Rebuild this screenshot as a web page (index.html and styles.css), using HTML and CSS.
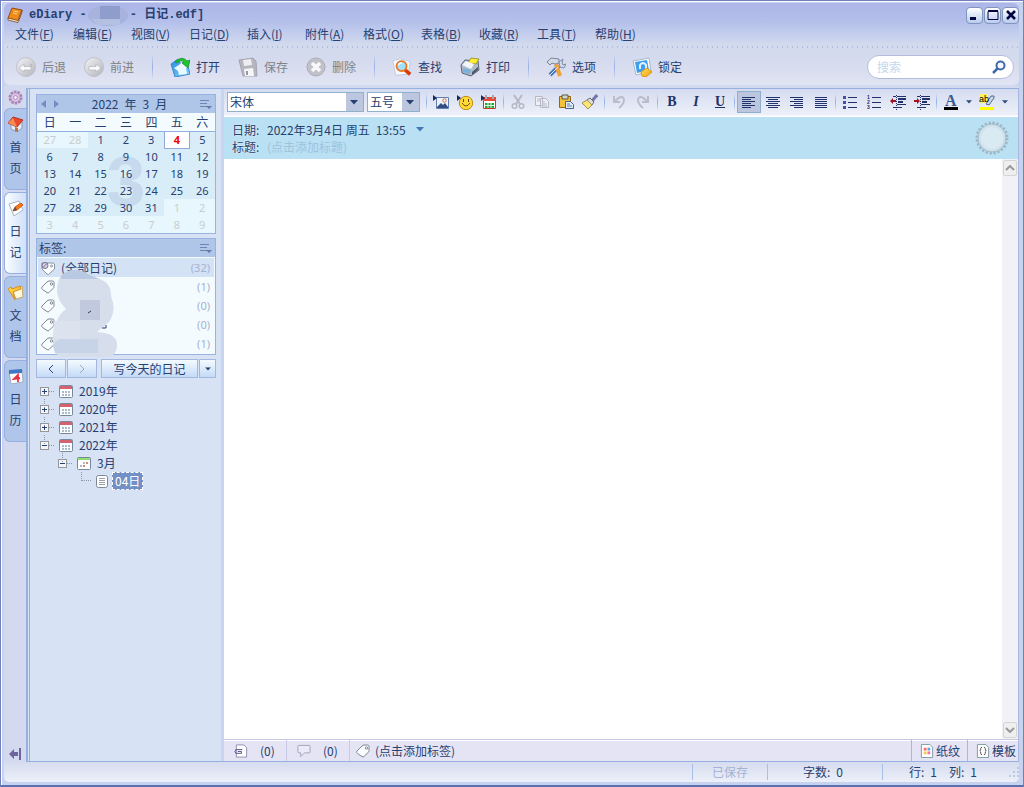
FILE: index.html
```
<!DOCTYPE html>
<html lang="zh-CN">
<head>
    <meta charset="UTF-8">
    <meta name="viewport" content="width=device-width, initial-scale=1.0">
    <title>eDiary - 日记.edf</title>
    <link rel="stylesheet" href="styles.css">
</head>
<body>
    <!-- Shared icons and gradients -->
    <svg class="defs" aria-hidden="true">
        <defs>
            <linearGradient id="silver" x1="0" y1="0" x2="1" y2="1"><stop offset="0" stop-color="#f2f2f6"/><stop offset="1" stop-color="#b4b5bd"/></linearGradient>
            <linearGradient id="sky" x1="0" y1="0" x2="1" y2="1"><stop offset="0" stop-color="#2588dc"/><stop offset="1" stop-color="#8ed8ff"/></linearGradient>
            <linearGradient id="gold" x1="0" y1="0" x2="1" y2="1"><stop offset="0" stop-color="#ffe65c"/><stop offset="1" stop-color="#ee9a10"/></linearGradient>
            <symbol id="tag" viewBox="0 0 14 14"><path d="M1 7 6 2Q7 1 8 1H11.500Q13 1 13 2.500V6.500Q13 7.500 12 8.500L8 12.500Q7 13.500 6 12.500L1.500 9.500Q0 8.500 1 7Z" fill="#fbfcfd" stroke="#7c8792"/><circle cx="10.500" cy="4" r="1.200" fill="#fff" stroke="#7c8792"/></symbol>
            <symbol id="year" viewBox="0 0 14 13"><rect x=".5" y=".5" width="13" height="12" rx="1" fill="#fff" stroke="#77889d"/><path d="M1 1h12v3H1z" fill="#d4636f"/><path d="M3 6h2v2H3zM6 6h2v2H6zM9 6h2v2H9zM3 9h2v2H3zM6 9h2v2H6zM9 9h2v2H9z" fill="#a9bbcf"/></symbol>
            <symbol id="menu" viewBox="0 0 12 10"><path d="M0 1.500h9M0 4.500h7M0 7.500h7" stroke="#7383b2"/><path d="M6 7h6L9 10z" fill="#6578ad"/></symbol>
            <symbol id="down" viewBox="0 0 8 5"><path d="M0 0h8L4 4.500z"/></symbol>
        </defs>
    </svg>

    <div class="window">
        <header class="header">
            <div class="titlebar">
                <svg class="book" viewBox="0 0 16 16"><path d="M5 1 15 3 11 14 1 11z" fill="#ef8918" stroke="#9a4e12"/><path d="M1 11 1 13 11 15.500 15 5 15 3 11 13.500z" fill="#fff3d6" stroke="#7b4314" stroke-width=".8"/><path d="M6.500 4l5 1M6 6l4 1" stroke="#ffd78c"/></svg>
                <h1 class="title">eDiary - <svg class="smudge" viewBox="0 0 40 21"><ellipse cx="20" cy="10.500" rx="20" ry="10.500" fill="#a7b2dd"/><path d="M12 1h20v13H12z" fill="#8f9dcc"/><path d="M3 14h29v6H10z" fill="#b4c0e2"/></svg>- 日记.edf]</h1>
                <div class="window-buttons">
                    <button class="win-btn" aria-label="最小化"><svg viewBox="0 0 12 12"><path d="M1 8h6v3H1z" fill="#04043f"/></svg></button>
                    <button class="win-btn" aria-label="最大化"><svg viewBox="0 0 12 12"><path d="M1 2.500h10v8H1zM1 1.500h10" fill="none" stroke="#04043f"/></svg></button>
                    <button class="win-btn" aria-label="关闭"><svg viewBox="0 0 12 12"><path d="M2 2l8 8M10 2l-8 8" stroke="#04043f" stroke-width="2.500"/></svg></button>
                </div>
            </div>

            <nav class="menubar">
                <button>文件(<u>F</u>)</button>
                <button>编辑(<u>E</u>)</button>
                <button>视图(<u>V</u>)</button>
                <button>日记(<u>D</u>)</button>
                <button>插入(<u>I</u>)</button>
                <button>附件(<u>A</u>)</button>
                <button>格式(<u>O</u>)</button>
                <button>表格(<u>B</u>)</button>
                <button>收藏(<u>R</u>)</button>
                <button>工具(<u>T</u>)</button>
                <button>帮助(<u>H</u>)</button>
            </nav>

            <div class="toolbar">
                <button class="tool" disabled><svg viewBox="0 0 20 20"><circle cx="10" cy="10" r="9.500" fill="url(#silver)" stroke="#bfc0c8"/><path d="M3 11l5-4v2.500h7V7v6H8v2z" fill="#fafafc" stroke="#b2b3ba" stroke-width=".7"/></svg>后退</button>
                <button class="tool" disabled><svg viewBox="0 0 20 20"><circle cx="10" cy="10" r="9.500" fill="url(#silver)" stroke="#bfc0c8"/><path d="M17 11l-5-4v2.500H5V13h7v2z" fill="#fafafc" stroke="#b2b3ba" stroke-width=".7"/></svg>前进</button>
                <span class="sep"></span>
                <button class="tool"><svg viewBox="0 0 20 20"><path d="M1 7 8 2 10 6 17 6 20 17 5 20z" fill="url(#sky)" stroke="#3a8bce"/><path d="M4 11l5-3 3-3 6 6-2 0 1 6-8 1-1-4z" fill="#eaf8ff"/><path d="M5 5Q12-2 17 4l3-1-2 8-6-5 2-1Q11 2 7 6z" fill="#20c52e" stroke="#118b27" stroke-width=".7"/></svg>打开</button>
                <button class="tool" disabled><svg viewBox="0 0 20 20"><path d="M1 3 15 1l3 3 1 15H5z" fill="#b5b6be" stroke="#a3a4ad"/><path d="M5 3l8-1 1 6-8 1z" fill="#eeeef2"/><path d="M6 12l9-1 1 8H7z" fill="#f6f6f9"/><path d="M8 14h2v4H8z" fill="#96979f"/></svg>保存</button>
                <button class="tool" disabled><svg viewBox="0 0 20 20"><circle cx="10" cy="10" r="9" fill="#c0c1c9" stroke="#acadb6"/><path d="M6 6l8 8M14 6l-8 8" stroke="#f9f9fc" stroke-width="3.500"/></svg>删除</button>
                <span class="sep"></span>
                <button class="tool"><svg viewBox="0 0 22 20"><path d="M1 3l8-2 11 3-2 14-14 1z" fill="#f8faff" stroke="#bcc7e2"/><path d="M14 13l6 5" stroke="#d83d08" stroke-width="4"/><circle cx="10.500" cy="9" r="5.500" fill="#9fe0fb" stroke="#f0721b" stroke-width="2"/><path d="M7 8q1-3 4-2" fill="none" stroke="#fff" stroke-width="1.500"/></svg>查找</button>
                <button class="tool"><svg viewBox="0 0 20 20"><path d="M1 8 5 3l13 1 1 9-8 6-9-3z" fill="#b4bcc9" stroke="#5a6577"/><path d="M8 6l3-5 8 1-3 5z" fill="#ffec30" stroke="#9c9a38"/><path d="M2 8l4-4 8 3-3 5z" fill="#f2f6fa"/><path d="M3 11l8 2-1 4-7-2z" fill="#77b3db"/><path d="M12 15l6-5v3l-6 5z" fill="#4c5869"/></svg>打印</button>
                <span class="sep"></span>
                <button class="tool"><svg viewBox="0 0 20 20"><path d="M13 9 4 18" stroke="#4578ba" stroke-width="4"/><path d="M10 7 14 19" stroke="#f0a13b" stroke-width="4"/><path d="M1 5l4-4 8 1v4l-4 1-3-1-2 2z" fill="#d2dae5" stroke="#7b8798"/><path d="M17 2l-4 3 1 5 4 1 2-4-3 1-1-2z" fill="#d6dfeb" stroke="#788ba8"/><path d="M12 10 4 18" stroke="#d8e4f2"/></svg>选项</button>
                <span class="sep"></span>
                <button class="tool"><svg viewBox="0 0 20 20"><path d="M1 4 17 1l2 13-15 4z" fill="#f8fcff" stroke="#a8b7c9"/><path d="M3 5l12-2 2 10-12 3z" fill="#409fed"/><path d="M8 12V8q3-4 6 0v5" fill="none" stroke="#e2f1ff" stroke-width="2"/><path d="M9 15l6-4 5 4-6 5-4-1z" fill="url(#gold)" stroke="#df9512"/></svg>锁定</button>
                <form class="search">
                    <input type="search" placeholder="搜索" aria-label="搜索">
                    <button aria-label="开始搜索"><svg viewBox="0 0 14 14"><circle cx="8.500" cy="5.500" r="4" fill="#f7fbff" stroke="#3f68ab" stroke-width="2"/><path d="M5.500 8.500 1 13" stroke="#3f68ab" stroke-width="2.500"/></svg></button>
                </form>
            </div>
        </header>

        <div class="body">
            <!-- Vertical tabs -->
            <nav class="tabs">
                <button class="gear" aria-label="设置"><svg viewBox="0 0 16 16"><circle cx="8" cy="8" r="6" fill="#e0c9e7" stroke="#a884b5" stroke-width="3" stroke-dasharray="2.600 1.100"/><circle cx="8" cy="8" r="5" fill="#dcc5e5" stroke="#b18cbc"/><circle cx="8" cy="8" r="2" fill="#fff" stroke="#a37db4"/></svg></button>
                <button class="tab"><svg viewBox="0 0 16 16"><path d="M3 7v6l6 3 5-4V6z" fill="#e4ecf7" stroke="#8b9bb5"/><path d="M0 7 5 1l10 3-6 7z" fill="#e84a30" stroke="#b83222"/><path d="M0 7l5-5 4 9" fill="#f58b55"/><path d="M7 11l3 1v4l-3-1z" fill="#ba713d"/></svg><span>首页</span></button>
                <button class="tab active"><svg viewBox="0 0 16 16"><path d="M1 4l10-3 4 9-9 6z" fill="#fff" stroke="#a9b3c4"/><path d="M5 11 7 7l6-4 2 2-6 5z" fill="#f57b1b" stroke="#c85716"/><path d="M5 11l2-4 2 3z" fill="#684e4a"/></svg><span>日记</span></button>
                <button class="tab"><svg viewBox="0 0 16 16"><path d="M4 5l10-3 1 11-7 2z" fill="#fff8dc" stroke="#c5a766"/><path d="M0 5 3 3l1 2 8-3 1 3-8 3 2 8z" fill="url(#gold)" stroke="#d99122"/></svg><span>文档</span></button>
                <button class="tab"><svg viewBox="0 0 16 16"><path d="M1 3l13-1 1 12-12 2z" fill="#fff" stroke="#9eacc2"/><path d="M1 2l13-1v4L1 6z" fill="#3d78c7"/><path d="M10 14V7l-4 4 6-1" fill="none" stroke="#ea3040" stroke-width="1.800"/></svg><span>日历</span></button>
                <button class="collapse" aria-label="收起"><svg viewBox="0 0 12 12"><path d="M0 6l5-5v3h4v4H5v3z" fill="#70639f"/><path d="M11 0v12" stroke="#70639f" stroke-width="2"/></svg></button>
            </nav>

            <main class="panels">
                <aside class="sidebar">
                    <!-- Calendar -->
                    <section class="box calendar">
                        <div class="box-head">
                            <button aria-label="上个月"><svg width="5" height="8" viewBox="0 0 5 8"><path d="M5 0v8L0 4z" fill="#788bbd"/></svg></button>
                            <button aria-label="下个月"><svg width="5" height="8" viewBox="0 0 5 8"><path d="M0 0v8l5-4z" fill="#788bbd"/></svg></button>
                            <span class="month">2022&ensp;年&ensp;3&ensp;月</span>
                            <button aria-label="日历菜单"><svg width="12" height="10"><use href="#menu"/></svg></button>
                        </div>
                        <div class="days">
                            <span class="watermark" aria-hidden="true">3</span>
                            <table>
                                <thead><tr><th>日</th><th>一</th><th>二</th><th>三</th><th>四</th><th>五</th><th>六</th></tr></thead>
                                <tbody>
                                    <tr><td class="out">27</td><td class="out">28</td><td>1</td><td>2</td><td>3</td><td class="today">4</td><td>5</td></tr>
                                    <tr><td>6</td><td>7</td><td>8</td><td>9</td><td>10</td><td>11</td><td>12</td></tr>
                                    <tr><td>13</td><td>14</td><td>15</td><td>16</td><td>17</td><td>18</td><td>19</td></tr>
                                    <tr><td>20</td><td>21</td><td>22</td><td>23</td><td>24</td><td>25</td><td>26</td></tr>
                                    <tr><td>27</td><td>28</td><td>29</td><td>30</td><td>31</td><td class="out">1</td><td class="out">2</td></tr>
                                    <tr><td class="out">3</td><td class="out">4</td><td class="out">5</td><td class="out">6</td><td class="out">7</td><td class="out">8</td><td class="out">9</td></tr>
                                </tbody>
                            </table>
                        </div>
                    </section>

                    <!-- Tags -->
                    <section class="box tags">
                        <div class="box-head">
                            <span class="box-title">标签:</span>
                            <button aria-label="标签菜单"><svg width="12" height="10"><use href="#menu"/></svg></button>
                        </div>
                        <ul class="tag-list">
                            <li class="selected"><svg viewBox="0 0 14 14"><path d="M1 4V2H12L13.500 3V8L7.500 13.500 6 13 1 8z" fill="#fff" stroke="#89939f"/><circle cx="4" cy="4.500" r="3" fill="#d9d4e7" stroke="#756f96"/><path d="M2 6.500l4-4" stroke="#756f96"/><circle cx="10.500" cy="5" r="1" fill="none" stroke="#89939f"/></svg><span>(全部日记)</span><b>(32)</b></li>
                            <li><svg><use href="#tag"/></svg><b>(1)</b></li>
                            <li><svg><use href="#tag"/></svg><b>(0)</b></li>
                            <li><svg><use href="#tag"/></svg><b>(0)</b></li>
                            <li><svg><use href="#tag"/></svg><b>(1)</b></li>
                        </ul>
                        <svg class="tag-smudge" viewBox="0 0 66 90" aria-hidden="true">
                            <path d="M9 7Q19-3 34 4 44 9 48 10 60 15 59 27 65 41 57 53L45 63Q66 64 65 77 64 90 50 88H8Q-2 82 2 60 6 45 14 40 6 32 5 23 5 12 9 7Z" fill="#d6deeb"/>
                            <path d="M9 7Q19-3 34 4L47 10H9z" fill="#b9c9e3"/><path d="M28 31h20v20H28z" fill="#c0c9dd"/><path d="M8 70h38v14H3l-2-8z" fill="#c7d3e7"/><path d="M2 52h26v18H1z" fill="#dce3ee"/>
                            <path d="M36 44l3-2M50 59h4v-3" fill="none" stroke="#2b3c70"/>
                        </svg>
                    </section>

                    <div class="day-nav">
                        <button class="glossy" aria-label="前一天"><svg width="6" height="8" viewBox="0 0 6 8"><path d="M5 0 1 4l4 4" fill="none" stroke="#2b4478"/></svg></button>
                        <button class="glossy" aria-label="后一天" disabled><svg width="6" height="8" viewBox="0 0 6 8"><path d="M1 0l4 4-4 4" fill="none" stroke="#9aa6bf"/></svg></button>
                        <button class="glossy write">写今天的日记</button>
                        <button class="glossy more" aria-label="更多"><svg width="6" height="4" viewBox="0 0 8 5"><use href="#down"/></svg></button>
                    </div>

                    <!-- Diary tree -->
                    <ul class="tree">
                        <li><button class="plus" aria-label="展开"></button><i></i><svg width="14" height="13"><use href="#year"/></svg><span>2019年</span></li>
                        <li><button class="plus" aria-label="展开"></button><i></i><svg width="14" height="13"><use href="#year"/></svg><span>2020年</span></li>
                        <li><button class="plus" aria-label="展开"></button><i></i><svg width="14" height="13"><use href="#year"/></svg><span>2021年</span></li>
                        <li><button class="minus" aria-label="折叠"></button><i></i><svg width="14" height="13"><use href="#year"/></svg><span>2022年</span></li>
                        <li class="level2"><button class="minus" aria-label="折叠"></button><i></i><svg width="14" height="13" viewBox="0 0 14 13"><rect x=".5" y=".5" width="13" height="12" rx="1" fill="#fff" stroke="#77889d"/><path d="M1 1h12v2H1z" fill="#8de070"/><path d="M6 5h2v2H6zM3 8h2v2H3z" fill="#a9bbcf"/><path d="M9 5h2v2H9zM6 8h2v2H6z" fill="#e38471"/></svg><span>3月</span></li>
                        <li class="level3"><em></em><svg width="12" height="13" viewBox="0 0 12 13"><rect x=".5" y=".5" width="11" height="12" rx="2" fill="#fff" stroke="#7c8794"/><path d="M3 3.500h6M3 5.500h6M3 7.500h6M3 9.500h6" stroke="#9a9fa7"/></svg><span class="chosen">04日</span></li>
                    </ul>
                </aside>

                <section class="editor">
                    <div class="format-bar">
                        <span class="combo font-combo"><select aria-label="字体"><option>宋体</option></select><svg><use href="#down"/></svg></span>
                        <span class="combo size-combo"><select aria-label="字号"><option>五号</option></select><svg><use href="#down"/></svg></span>
                        <span class="bar-sep first"></span>
                        <button aria-label="插入图片"><svg viewBox="0 0 16 16"><path d="M3.500 3.500h12v11h-12z" fill="#e9f4ff" stroke="#637eb2"/><path d="M4 13l4-4 2 2 2-2 3 4v1H4z" fill="#344c80"/><circle cx="11.500" cy="6.500" r="1.700" fill="#fff" stroke="#d36644"/><path d="M0 1l4 3-4 3z" fill="#18265e"/></svg></button>
                        <button aria-label="插入表情"><svg viewBox="0 0 16 16"><circle cx="9" cy="9" r="6.700" fill="#ffdc35" stroke="#bd8918"/><path d="M5 9q4 6 8 0" fill="none" stroke="#794e10"/><path d="M6 5h1v3H6zM11 5h1v3h-1z" fill="#664617"/><path d="M0 1l4 3-4 3z" fill="#18265e"/></svg></button>
                        <button aria-label="插入日期"><svg viewBox="0 0 16 16"><path d="M2.500 3.500h12v11h-12z" fill="#fff" stroke="#c43a2e"/><path d="M2 3h13v4H2z" fill="#e34a38"/><path d="M4 9h9v5H4z" fill="#29a63c"/><path d="M4 11.500h9M7 9v5M10 9v5" stroke="#d7f6d8"/><path d="M5 1v4M12 1v4" stroke="#a8a8b0" stroke-width="2"/><path d="M0 1l4 3-4 3z" fill="#18265e"/></svg></button>
                        <span class="bar-sep"></span>
                        <button aria-label="剪切" disabled><svg viewBox="0 0 16 16"><path d="M4 1l6 9M12 1 6 10" stroke="#b5b8c5" stroke-width="2"/><circle cx="4.500" cy="12" r="2.300" fill="none" stroke="#b5b8c5" stroke-width="1.500"/><circle cx="11.500" cy="12" r="2.300" fill="none" stroke="#b5b8c5" stroke-width="1.500"/></svg></button>
                        <button aria-label="复制" disabled><svg viewBox="0 0 16 16"><path d="M1.500 2.500h7v9h-7zM6.500 4.500h5l3 3v6h-8z" fill="#eff0f6" stroke="#b5b8c5"/><path d="M3 5h3M3 7h3M8 8h3M8 10h5M8 12h5" stroke="#b5b8c5"/></svg></button>
                        <button aria-label="粘贴"><svg viewBox="0 0 16 16"><path d="M1.500 2.500h11v11h-11z" fill="#f4c13b" stroke="#8e6818"/><path d="M4 1h6v4H4z" fill="#d5d4cb" stroke="#5e5843"/><path d="M7.500 7.500h5l3 3v4h-8z" fill="#e1edfb" stroke="#46648e"/><path d="M9 10h3M9 12h5" stroke="#647fa5"/></svg></button>
                        <button aria-label="格式刷"><svg viewBox="0 0 16 16"><path d="M10 7l5-6" stroke="#7775ad" stroke-width="3"/><path d="M8 4l4 4-2 3-5-5z" fill="#ddd" stroke="#66657b"/><path d="M5 6l5 5-4 4-6-6z" fill="#f8e575" stroke="#a09155"/></svg></button>
                        <span class="bar-sep"></span>
                        <button aria-label="撤销" disabled><svg viewBox="0 0 16 16"><path d="M3 2v6h6M3 8Q12-1 13 6q0 4-5 8" fill="none" stroke="#bbbdca" stroke-width="2"/></svg></button>
                        <button aria-label="重做" disabled><svg viewBox="0 0 16 16"><path d="M13 2v6H7M13 8Q4-1 3 6q0 4 5 8" fill="none" stroke="#bbbdca" stroke-width="2"/></svg></button>
                        <span class="bar-sep"></span>
                        <button class="letter">B</button>
                        <button class="letter italic">I</button>
                        <button class="letter under">U</button>
                        <span class="bar-sep"></span>
                        <button class="pressed" aria-label="左对齐"><svg viewBox="0 0 16 16"><path d="M1 3.500h13M1 5.500h9M1 7.500h13M1 9.500h9M1 11.500h13M1 13.500h9" stroke="#22336b"/></svg></button>
                        <button aria-label="居中"><svg viewBox="0 0 16 16"><path d="M1 3.500h14M3 5.500h10M1 7.500h14M3 9.500h10M1 11.500h14M3 13.500h10" stroke="#22336b"/></svg></button>
                        <button aria-label="右对齐"><svg viewBox="0 0 16 16"><path d="M1 3.500h13M5 5.500h9M1 7.500h13M5 9.500h9M1 11.500h13M5 13.500h9" stroke="#22336b"/></svg></button>
                        <button aria-label="两端对齐"><svg viewBox="0 0 16 16"><path d="M2 3.500h12M2 5.500h12M2 7.500h12M2 9.500h12M2 11.500h12M2 13.500h12" stroke="#22336b"/></svg></button>
                        <span class="bar-sep"></span>
                        <button aria-label="项目符号"><svg viewBox="0 0 16 16"><path d="M1 2h3v3H1zM1 7h3v3H1zM1 12h3v3H1z" fill="#4550ad"/><path d="M6 3.500h9M6 8.500h9M6 13.500h9" stroke="#22336b"/></svg></button>
                        <button aria-label="编号"><svg viewBox="0 0 16 16"><text class="num" x="1" y="5">1</text><text class="num" x="1" y="10">2</text><text class="num" x="1" y="15">3</text><path d="M6 3.500h9M6 8.500h9M6 13.500h9" stroke="#22336b"/></svg></button>
                        <button aria-label="减少缩进"><svg viewBox="0 0 16 16"><path d="M3 2.500h3M7 2.500h9M7 10.500h9M3 13.500h3M7 13.500h5" stroke="#22336b"/><path d="M8 5h8M8 8h5" stroke="#22336b" stroke-width="2"/><path d="M6.500 1v15" stroke="#22336b" stroke-dasharray="1 1"/><path d="M0 7l3-3v2h3v2H3v2z" fill="#a3121e"/></svg></button>
                        <button aria-label="增加缩进"><svg viewBox="0 0 16 16"><path d="M3 2.500h3M7 2.500h9M7 10.500h9M3 13.500h3M7 13.500h5" stroke="#22336b"/><path d="M8 5h8M8 8h5" stroke="#22336b" stroke-width="2"/><path d="M6.500 1v15" stroke="#22336b" stroke-dasharray="1 1"/><path d="M6 7 3 4v2H0v2h3v2z" fill="#a3121e"/></svg></button>
                        <span class="bar-sep"></span>
                        <button aria-label="字体颜色"><svg class="tall" viewBox="0 0 16 20"><text class="big-a" x="2" y="14">A</text><path d="M1 15h14v3H1z"/></svg></button>
                        <button class="caret" aria-label="更多字体颜色"><svg><use href="#down"/></svg></button>
                        <button aria-label="突出显示"><svg class="tall" viewBox="0 0 16 20"><path d="M0 2h9v9H0z" fill="#fff45b"/><path d="M7 12 12 4h3v2l-5 7z" fill="#cad8e9" stroke="#526b8d"/><text class="ab" x="0" y="10">ab</text><path d="M1 15h14v3H1z" fill="#ff0"/></svg></button>
                        <button class="caret" aria-label="更多突出显示颜色"><svg><use href="#down"/></svg></button>
                    </div>

                    <div class="entry-head">
                        <div class="entry-info">
                            <div><span class="key">日期:</span><time datetime="2022-03-04T13:55">2022年3月4日 周五&ensp;13:55</time><button aria-label="选择日期"><svg><use href="#down"/></svg></button></div>
                            <div><label class="key" for="entry-title">标题:</label><input id="entry-title" type="text" placeholder="(点击添加标题)"></div>
                        </div>
                        <svg class="seal" viewBox="0 0 34 34"><circle cx="17" cy="17" r="14.500" fill="none" stroke="#9cb6c4" stroke-width="4" stroke-dasharray="2.200 1.596"/><circle cx="17" cy="17" r="14" fill="#cfe2ec" stroke="#a3bdca"/><circle cx="17" cy="17" r="11" fill="#d9eaf3"/></svg>
                    </div>

                    <div class="page">
                        <textarea aria-label="日记正文"></textarea>
                        <div class="scrollbar">
                            <button aria-label="向上滚动"><svg width="10" height="6" viewBox="0 0 10 6"><path d="M1 5l4-4 4 4" fill="none" stroke="#999" stroke-width="2"/></svg></button>
                            <button aria-label="向下滚动"><svg width="10" height="6" viewBox="0 0 10 6"><path d="M1 1l4 4 4-4" fill="none" stroke="#999" stroke-width="2"/></svg></button>
                        </div>
                    </div>

                    <div class="entry-foot">
                        <button class="count"><svg viewBox="0 0 15 14"><path d="M2.500.5h8l3 3v10h-11z" fill="#fff" stroke="#8f8bae"/><path d="M9 5.500H2Q0 7.500 2 9.500h6V7.500H4" fill="none" stroke="#4c4b83"/></svg>(0)</button>
                        <button class="count"><svg viewBox="0 0 15 14"><path d="M2 1h11q1 0 1 1v6q0 1-1 1H8l-4 4V9H2Q1 9 1 8V2q0-1 1-1z" fill="#eceaf6" stroke="#a29fbb"/></svg>(0)</button>
                        <button class="add-tag"><svg><use href="#tag"/></svg>(点击添加标签)</button>
                        <span class="foot-gap"></span>
                        <button class="foot-btn"><svg viewBox="0 0 13 15"><path d="M.5.500h9l3 3v11H.5z" fill="#fff" stroke="#78999a"/><path d="M3 4h3v3H3z" fill="#ff6b62"/><path d="M7 4h3v3H7z" fill="#55a8ec"/><path d="M3 8h3v3H3z" fill="#f4ca50"/><path d="M7 8h3v3H7z" fill="#f66bb1"/></svg>纸纹</button>
                        <button class="foot-btn"><svg viewBox="0 0 13 15"><path d="M.5.500h9l3 3v11H.5z" fill="#fff" stroke="#78999a"/><path d="M5.500 3.500Q4 3.500 4 5v1.500L3 7.500l1 1V10q0 1.500 1.500 1.500M7.500 3.500Q9 3.500 9 5v1.500l1 1-1 1V10q0 1.500-1.500 1.500" fill="none" stroke="#4c4c4c"/></svg>模板</button>
                    </div>
                </section>
            </main>
        </div>

        <footer class="statusbar">
            <span class="saved">已保存</span>
            <span class="words">字数:&ensp;0</span>
            <span class="position">行:&ensp;1&emsp;列:&ensp;1</span>
            <svg class="grip" viewBox="0 0 12 12"><path d="M10 1h2v2h-2zM6 5h2v2H6zM10 5h2v2h-2zM2 9h2v2H2zM6 9h2v2H6zM10 9h2v2h-2z" fill="#bcc7e7"/></svg>
        </footer>
    </div>
</body>
</html>
```
FILE: styles.css
```
* {
    box-sizing: border-box;
}
body {
    margin: 0;
    font-family: "Noto Sans CJK SC", sans-serif;
    font-size: 12px;
    line-height: 16px;
    color: #26406f;
}
button, input, select, textarea {
    font: inherit;
    color: inherit;
    margin: 0;
    padding: 0;
    border: 0;
    background: none;
}
svg {
    display: block;
    flex: none;
}
ul {
    margin: 0;
    padding: 0;
    list-style: none;
}
.defs {
    position: absolute;
    width: 0;
    height: 0;
}
.window {
    display: flex;
    flex-direction: column;
    min-height: 100vh;
    padding: 2px 4px 3px 3px;
    border: 1px solid #6f80bd;
    border-bottom: 2px solid #5b70b2;
    background: #c7d2ef;
    box-shadow: inset 1px 1px 0 #fff;
}

/* Header */
.header {
    padding-bottom: 2px;
    border-bottom: 1px solid #d0daf4;
    border-radius: 6px;
    background: linear-gradient(#adb6e8, #b3bfeb 18px, #d2daee 42px, #d6dbee 60px, #e1e4f3);
}
.titlebar {
    display: flex;
    align-items: center;
    height: 22px;
    padding: 2px 0 0 3px;
}
.book {
    width: 16px;
    height: 16px;
}
.title {
    display: flex;
    align-items: center;
    flex: 1;
    margin: 0 0 0 6px;
    font: bold 12px/16px "Liberation Mono", "Noto Sans CJK SC", monospace;
    white-space: pre;
}
.smudge {
    width: 40px;
    height: 21px;
    margin: 0 2px 0 -6px;
}
.window-buttons {
    display: flex;
    gap: 1px;
}
.win-btn {
    display: grid;
    place-items: center;
    width: 17px;
    height: 17px;
    border: 1px solid #7f95bb;
    border-radius: 4px;
    background: linear-gradient(#fff, #b9cbee);
}
.win-btn svg {
    width: 12px;
    height: 12px;
}
.menubar {
    display: flex;
    height: 21px;
    padding: 0 10px 3px 11px;
}
.menubar button {
    width: 58px;
    text-align: left;
    white-space: nowrap;
}
.toolbar {
    display: flex;
    align-items: center;
    gap: 17px;
    height: 37px;
    padding: 4px 4px 0 11px;
    margin: 0 1px;
    background: radial-gradient(circle, #b2bee0 1px, transparent 1px) 0 0 / 5px 2px repeat-x;
}
.tool {
    display: flex;
    align-items: center;
    gap: 6px;
    width: 51px;
    white-space: nowrap;
}
.tool svg {
    width: 20px;
    height: 20px;
}
.tool:disabled {
    color: #808286;
}
.sep {
    width: 1px;
    height: 26px;
    background: linear-gradient(transparent, #94b0e5, transparent);
}
.search {
    display: flex;
    align-items: center;
    width: 147px;
    height: 24px;
    margin-left: auto;
    padding: 0 7px 0 9px;
    border: 1px solid #b2bddc;
    border-radius: 12px;
    background: #fff;
}
.search input {
    flex: 1;
    min-width: 0;
    outline: none;
}
.search input::placeholder {
    color: #c6d8eb;
}
.search svg {
    width: 14px;
    height: 14px;
}

/* Body */
.body {
    display: flex;
    flex: 1;
    padding-top: 2px;
    background: #d3daef;
}
.tabs {
    display: flex;
    flex-direction: column;
    gap: 2px;
    width: 22px;
}
.gear {
    display: grid;
    place-items: center;
    height: 18px;
}
.gear svg {
    width: 15px;
    height: 15px;
}
.tab {
    display: flex;
    flex-direction: column;
    align-items: center;
    gap: 4px;
    height: 82px;
    padding-top: 7px;
    border: 1px solid #94afe0;
    border-right: 0;
    border-radius: 6px 0 0 6px;
    background: #afc5e9;
}
.tab svg {
    width: 16px;
    height: 16px;
}
.tab span {
    width: 12px;
    line-height: 21px;
}
.tab.active {
    background: linear-gradient(90deg, #fbfdff, #cfe0f8);
}
.collapse {
    margin: auto 0 2px 5px;
}
.collapse svg {
    width: 12px;
    height: 12px;
}
.panels {
    display: flex;
    flex: 1;
    min-width: 0;
    border: 1px solid #97b0e2;
    border-right-color: #a9b8e1;
    background: #c8d5f0;
}
.sidebar {
    width: 194px;
    margin-right: 3px;
    padding: 5px 5px 0 5px;
    border-left: 3px double #97b0e2;
    background: #d7e2f5;
}
.box {
    position: relative;
    margin: 0 0 4px 1px;
    border: 1px solid #99b2e0;
    background: #f4fbff;
}
.box-head {
    display: flex;
    align-items: center;
    gap: 8px;
    height: 18px;
    padding: 0 3px 0 4px;
    background: #afc6e9;
}
.box-title {
    flex: 1;
    margin-left: -2px;
}
.month {
    flex: 1;
    text-align: center;
    white-space: nowrap;
}
.days {
    position: relative;
    background: #d9edf9;
}
.watermark {
    position: absolute;
    top: 34px;
    left: 50%;
    transform: translateX(-50%);
    font: bold 70px/70px "Liberation Sans", sans-serif;
    color: #c7daed;
}
.days table {
    position: relative;
    width: 100%;
    table-layout: fixed;
    border-collapse: collapse;
    text-align: center;
}
.days th {
    height: 18px;
    padding: 0;
    border-bottom: 1px solid #94afe0;
    background: #f4fbff;
    font-weight: normal;
}
.days td {
    height: 17px;
    padding: 0;
    font: 11px/15px "Noto Sans", sans-serif;
}
.days .out {
    background: #e8f6fd;
    color: #c9cdcf;
}
.days .today {
    border: 1px solid #92a9d8;
    background: #fff;
    font-weight: bold;
    color: #f00000;
}
.tag-list {
    padding: 1px;
}
.tag-list li {
    display: flex;
    align-items: center;
    gap: 6px;
    height: 19px;
    padding: 0 4px 0 3px;
}
.tag-list svg {
    width: 14px;
    height: 14px;
}
.tag-list .selected {
    background: #d4e2f5;
}
.tag-list b {
    margin-left: auto;
    font: 11px/16px "Noto Sans", sans-serif;
    color: #a5b1d4;
}
.tag-smudge {
    position: absolute;
    top: 30px;
    left: 15px;
    width: 66px;
    height: 90px;
}
.day-nav {
    display: flex;
    gap: 1px;
    margin-left: 1px;
}
.glossy {
    display: grid;
    place-items: center;
    width: 30px;
    height: 19px;
    border: 1px solid #a4b8df;
    background: linear-gradient(#f4fbff, #c4daf7);
}
.glossy.write {
    flex: 1;
    margin-left: 3px;
}
.glossy.more {
    width: 17px;
    fill: #26406f;
}
.tree {
    padding: 4px 0 0 5px;
}
.tree li {
    display: flex;
    align-items: center;
    height: 18px;
}
.tree button {
    width: 9px;
    height: 9px;
    border: 1px solid #98989a;
    background: linear-gradient(#26406f, #26406f) center / 5px 1px no-repeat, #f1f5fb;
}
.tree .plus {
    background: linear-gradient(#26406f, #26406f) center / 5px 1px no-repeat, linear-gradient(#26406f, #26406f) center / 1px 5px no-repeat, #f1f5fb;
}
.tree i {
    width: 5px;
    margin-right: 5px;
    border-top: 1px dotted #8d96a6;
}
.tree li + li:not(.level3) button::before {
    content: "";
    display: block;
    height: 9px;
    margin: -10px 0 0 3px;
    border-left: 1px dotted #8d96a6;
}
.tree span {
    margin-left: 6px;
}
.tree .level2 {
    padding-left: 18px;
}
.tree .level3 {
    padding-left: 41px;
}
.tree em {
    width: 10px;
    height: 9px;
    margin: 0 5px 9px 0;
    border: 1px dotted #8d96a6;
    border-width: 0 0 1px 1px;
}
.tree .chosen {
    margin-left: 4px;
    padding: 0 2px;
    border: 1px dashed #fff;
    background: #7390c4;
    line-height: 16px;
    color: #fff;
}

/* Editor */
.editor {
    display: flex;
    flex-direction: column;
    flex: 1;
    min-width: 0;
    background: #fff;
}
.format-bar {
    display: flex;
    align-items: center;
    height: 27px;
    padding: 0 6px 0 3px;
    border-bottom: 1px solid #f6f9fd;
    background: linear-gradient(#d5dcf0, #edf0f9);
}
.format-bar button {
    display: grid;
    place-items: center;
    flex: none;
    width: 24px;
    height: 22px;
}
.format-bar button svg {
    width: 16px;
    height: 16px;
}
.format-bar button .tall {
    height: 20px;
}
.format-bar .caret {
    width: 12px;
}
.format-bar .caret svg {
    width: 6px;
    height: 4px;
    fill: #2f4b79;
}
.format-bar .pressed {
    border: 1px solid #8eafcb;
    background: #bcc6df;
}
.format-bar .letter {
    font: bold 14px/16px "Liberation Serif", serif;
    color: #1f3169;
}
.format-bar .italic {
    font-style: italic;
}
.format-bar .under {
    text-decoration: underline;
}
.num {
    font: bold 5px "Liberation Sans", sans-serif;
    fill: #1d2478;
}
.big-a {
    font: bold 16px "Liberation Serif", serif;
    fill: #365a94;
}
.ab {
    font: 9px "Liberation Sans", sans-serif;
}
.combo {
    display: flex;
    align-items: center;
    position: relative;
    height: 20px;
    border: 1px solid #8fb1cc;
    background: #fff;
}
.combo select {
    width: 100%;
    height: 18px;
    padding-left: 2px;
    appearance: none;
    background: linear-gradient(#bcc6df, #bcc6df) right / 17px 100% no-repeat;
}
.combo svg {
    position: absolute;
    right: 5px;
    width: 8px;
    height: 5px;
    fill: #26406f;
    pointer-events: none;
}
.font-combo {
    width: 137px;
    margin-right: 3px;
}
.size-combo {
    width: 53px;
}
.bar-sep {
    flex: none;
    width: 5px;
    height: 18px;
    background: linear-gradient(transparent, #8eb2e8, transparent) center / 1px 100% no-repeat;
}
.bar-sep.first {
    margin-left: 4px;
}
.entry-head {
    display: flex;
    justify-content: space-between;
    align-items: center;
    height: 43px;
    padding: 0 9px 0 8px;
    border-top: 1px solid #fff;
    background: #bae0f4;
}
.entry-info div {
    display: flex;
    align-items: center;
    height: 17px;
}
.key {
    width: 35px;
    text-shadow: 0 0 2px #fff;
}
.entry-info button {
    margin-left: 10px;
}
.entry-info svg {
    width: 8px;
    height: 5px;
    fill: #4578b5;
}
.entry-info input {
    width: 160px;
    height: 17px;
    outline: none;
}
.entry-info input::placeholder {
    color: #9dc3dc;
}
.seal {
    width: 34px;
    height: 34px;
}
.page {
    display: flex;
    flex: 1;
    min-height: 200px;
}
.page textarea {
    flex: 1;
    padding: 8px;
    resize: none;
    outline: none;
}
.scrollbar {
    display: flex;
    flex-direction: column;
    justify-content: space-between;
    width: 16px;
    padding: 1px;
    background: #f2f1f8;
}
.scrollbar button {
    display: grid;
    place-items: center;
    height: 16px;
    border: 1px solid #d5d5d5;
    border-radius: 2px;
    background: #efefef;
}
.entry-foot {
    display: flex;
    height: 22px;
    border-top: 1px solid #c9c8e3;
    background: #e5e4f5;
    box-shadow: inset 0 1px 0 #fff;
}
.entry-foot button {
    display: flex;
    align-items: center;
    white-space: nowrap;
}
.entry-foot svg {
    width: 14px;
    height: 14px;
}
.entry-foot .count {
    gap: 12px;
    width: 63px;
    padding-left: 10px;
    border-right: 1px solid #c9c8e6;
}
.entry-foot .add-tag {
    gap: 5px;
    padding-left: 6px;
}
.foot-gap {
    flex: 1;
}
.entry-foot .foot-btn {
    gap: 2px;
    padding: 0 7px 0 8px;
    border-left: 1px solid #9fb8e7;
}
.entry-foot .foot-btn:last-child {
    padding-right: 2px;
}

/* Status bar */
.statusbar {
    display: flex;
    justify-content: flex-end;
    align-items: center;
    height: 20px;
    border-radius: 0 0 5px 5px;
    background: linear-gradient(#d6dcef, #edf0f9);
}
.statusbar span {
    border-left: 1px solid #a9bfe8;
    white-space: nowrap;
}
.statusbar .saved {
    width: 75px;
    padding-left: 19px;
    color: #a5b1d4;
}
.statusbar .words {
    width: 115px;
    padding-left: 35px;
}
.statusbar .position {
    width: 125px;
    padding-left: 26px;
}
.grip {
    width: 12px;
    height: 12px;
}
```
